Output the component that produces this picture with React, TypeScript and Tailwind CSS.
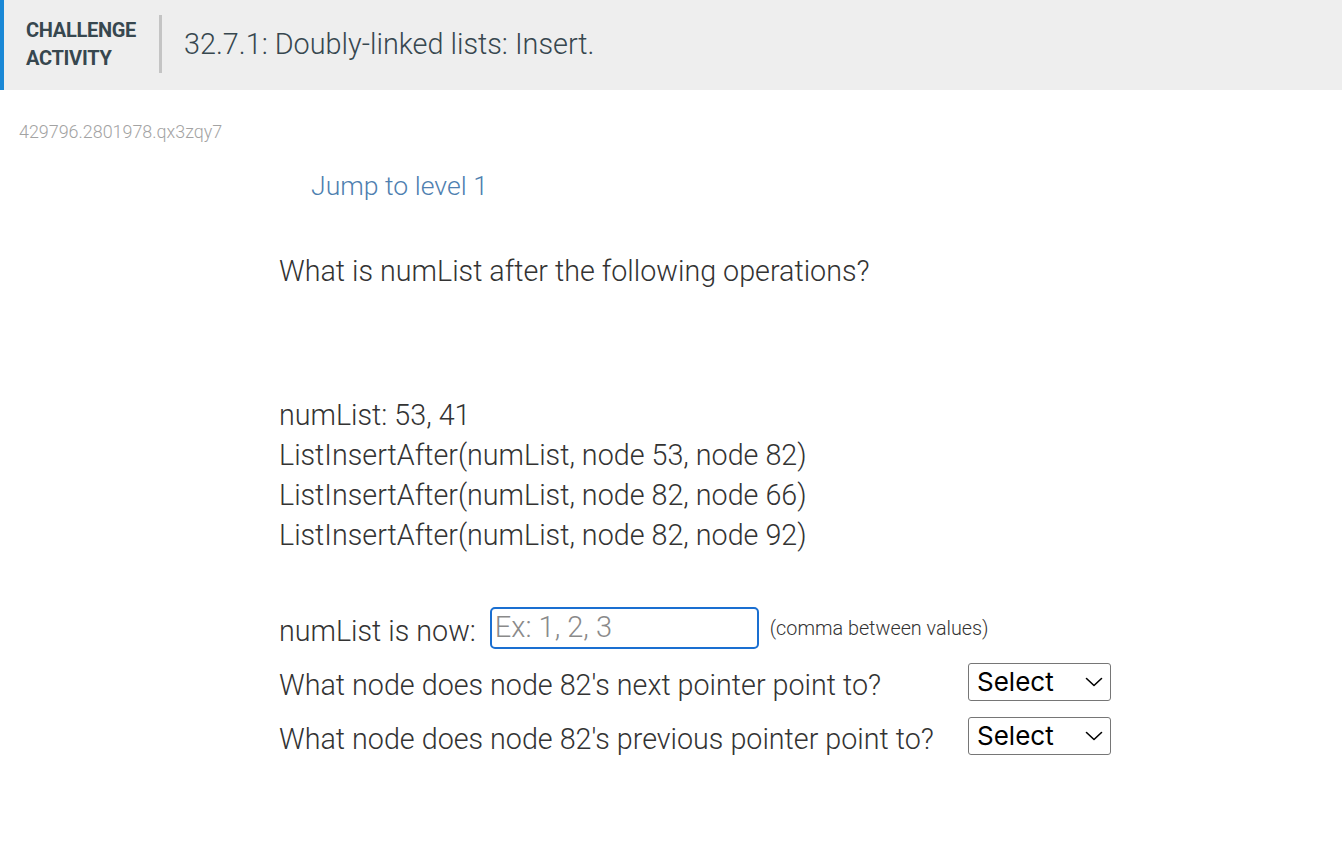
const ops = [
  "numList: 53, 41",
  "ListInsertAfter(numList, node 53, node 82)",
  "ListInsertAfter(numList, node 82, node 66)",
  "ListInsertAfter(numList, node 82, node 92)",
];

function SelectBox() {
  return (
    <div className="w-[143px] h-[38px] border border-[#767676] rounded-[3px] bg-white flex items-center justify-between pl-[8px] pr-[7px] font-['Inter',sans-serif] text-[26px] leading-[30px] text-black">
      <span>Select</span>
      <svg width="18" height="10" viewBox="0 0 18 10" fill="none" className="text-black">
        <path d="M1.5 1.5 L9 8.5 L16.5 1.5" stroke="currentColor" strokeWidth="1.6" strokeLinecap="round" strokeLinejoin="round" />
      </svg>
    </div>
  );
}

export default function App() {
  return (
    <div className="w-[1342px] h-[850px] bg-white font-['Roboto',sans-serif] text-[#333333] overflow-hidden">
      {/* Header */}
      <div className="h-[90px] bg-[#eeeeee] border-l-[4px] border-[#1a88d6] flex items-center">
        <div className="pl-[22px] w-[155px] text-[20px] leading-[28px] font-bold text-[#37474f] tracking-[-0.3px] -mt-[2px]">
          <div>CHALLENGE</div>
          <div>ACTIVITY</div>
        </div>
        <div className="w-[3px] h-[58px] bg-[#c4c4c4] -mt-[2px]" />
        <h1 className="pl-[22px] text-[28.8px] font-light text-[#37474f]">32.7.1: Doubly-linked lists: Insert.</h1>
      </div>

      <div className="pl-[19px] pt-[33px] text-[17.9px] font-light text-[#a3a3a3] leading-[18px]">429796.2801978.qx3zqy7</div>

      <div className="pl-[279px]">
        <div className="pl-[32px] pt-[29px] text-[26.6px] font-light text-[#4f7fb0] leading-[32px]">Jump to level 1</div>

        <p className="pt-[53px] text-[28.7px] font-light leading-[32px]">What is numList after the following operations?</p>

        <div className="pt-[108px] text-[28.7px] font-light leading-[40px]">
          {ops.map((op) => (
            <div key={op}>{op}</div>
          ))}
        </div>

        <div className="pt-[52px] flex items-start">
          <span className="h-[42px] text-[28.7px] font-light leading-[49px]">numList is now:</span>
          <div className="ml-[14px] w-[269px] h-[42px] border-2 border-[#1a6fd1] rounded-[5px] flex items-center px-[3px] text-[29px] font-light text-[#8a8a8a]">Ex: 1, 2, 3</div>
          <span className="ml-[11px] h-[42px] text-[19.8px] font-light leading-[44px]">(comma between values)</span>
        </div>

        <div className="pt-[14px] flex items-start">
          <span className="w-[689px] h-[38px] text-[28.7px] font-light leading-[45px]">What node does node 82's next pointer point to?</span>
          <SelectBox />
        </div>
        <div className="pt-[16px] flex items-start">
          <span className="w-[689px] h-[38px] text-[28.7px] font-light leading-[45px]">What node does node 82's previous pointer point to?</span>
          <SelectBox />
        </div>
      </div>
    </div>
  );
}
